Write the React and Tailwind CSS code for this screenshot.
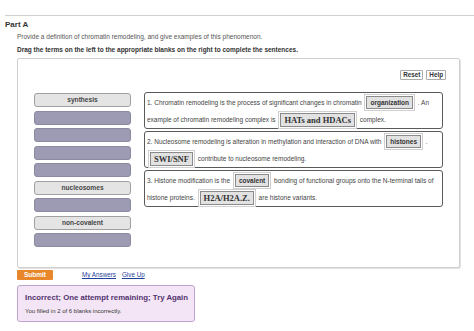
export default function App() {
  const Sans = ({ children }) => (
    <span className="inline-block align-middle mx-[3px] px-[3px] h-[13px] leading-[11px] border border-[#8a8a8a] bg-[#e2e2e2] text-[#333] font-bold text-[6.5px] outline outline-1 outline-[#d0d0d0] outline-offset-[1px]">
      {children}
    </span>
  );
  const Serif = ({ children }) => (
    <span className="inline-block align-middle mx-[3px] px-[3px] h-[14px] leading-[12px] border border-[#8a8a8a] bg-[#e2e2e2] text-[#333] font-bold text-[8.5px] font-['Liberation_Serif',serif] outline outline-1 outline-[#d0d0d0] outline-offset-[1px]">
      {children}
    </span>
  );
  const Tile = ({ label }) =>
    label ? (
      <div className="h-[14px] rounded-[3px] border border-[#a0a0a0] bg-[#e4e4e4] text-center text-[6.6px] font-bold leading-[12px] text-[#444]">
        {label}
      </div>
    ) : (
      <div className="h-[14px] rounded-[3px] border border-[#8a8aa0] bg-[#9c9bb3]" />
    );
  const Box = ({ children }) => (
    <div className="rounded-[3px] border-[1.5px] border-[#5a5a5a] bg-white px-[2px] py-[0.5px] text-[6.5px] leading-[17px] text-[#444] whitespace-nowrap">
      {children}
    </div>
  );
  return (
    <div className="w-[474px] h-[331px] bg-white pl-[5px] pt-[15px] font-['Liberation_Sans',Arial,sans-serif] overflow-hidden">
      <div className="border-t border-[#cfcfcf]" />
      <div className="mt-[4px] text-[8px] font-bold leading-[10px] text-[#333]">Part A</div>
      <div className="pl-[12px]">
        <p className="mt-[3px] text-[6.5px] leading-[8px] text-[#555]">
          Provide a definition of chromatin remodeling, and give examples of this phenomenon.
        </p>
        <p className="mt-[5px] text-[6.5px] font-bold leading-[8px] text-[#333]">
          Drag the terms on the left to the appropriate blanks on the right to complete the sentences.
        </p>
        <div className="mt-[4px] w-[443px] h-[210px] rounded-[2px] border border-[#cfcfcf] shadow-[1px_1px_1px_rgba(0,0,0,0.12)] bg-white pt-[11px] pr-[13px] pl-[16px]">
          <div className="flex justify-end gap-[3px] h-[10px]">
            <span className="px-[2px] h-[10px] leading-[8px] border border-[#aaa] rounded-[1px] bg-white text-[6.3px] font-bold text-[#333]">Reset</span>
            <span className="px-[2px] h-[10px] leading-[8px] border border-[#aaa] rounded-[1px] bg-white text-[6.3px] font-bold text-[#333]">Help</span>
          </div>
          <div className="mt-[12px] flex gap-[13px]">
            <div className="w-[97px] mt-[1px] flex flex-col gap-[3.5px]">
              <Tile label="synthesis" />
              <Tile />
              <Tile />
              <Tile />
              <Tile />
              <Tile label="nucleosomes" />
              <Tile />
              <Tile label="non-covalent" />
              <Tile />
            </div>
            <div className="w-[299px] flex flex-col gap-[2px]">
              <Box>
                1. Chromatin remodeling is the process of significant changes in chromatin <Sans>organization</Sans> . An
                <br />
                example of chromatin remodeling complex is <Serif>HATs and HDACs</Serif> complex.
              </Box>
              <Box>
                2. Nucleosome remodeling is alteration in methylation and interaction of DNA with <Sans>histones</Sans> .
                <br />
                <Serif>SWI/SNF</Serif> contribute to nucleosome remodeling.
              </Box>
              <Box>
                3. Histone modification is the <Sans>covalent</Sans> bonding of functional groups onto the N-terminal tails of
                <br />
                histone proteins. <Serif>H2A/H2A.Z.</Serif> are histone variants.
              </Box>
            </div>
          </div>
        </div>
        <div className="mt-[2px] flex items-center h-[10px]">
          <span className="w-[36px] h-[10px] rounded-[1px] bg-[#e8872a] text-white text-[6.5px] font-bold leading-[10px] text-center">Submit</span>
          <span className="ml-[29px] text-[6.3px] text-[#1f3f99] underline">My Answers</span>
          <span className="ml-[6px] text-[6.3px] text-[#1f3f99] underline">Give Up</span>
        </div>
        <div className="mt-[5px] w-[178px] h-[37px] rounded-[3px] border border-[#bfa3cf] bg-[#f3e5f5] pl-[7px] pt-[7px]">
          <div className="text-[7.8px] font-bold leading-[10px] text-[#52336f]">Incorrect; One attempt remaining; Try Again</div>
          <div className="mt-[4px] text-[6px] leading-[8px] text-[#333]">You filled in 2 of 6 blanks incorrectly.</div>
        </div>
      </div>
    </div>
  );
}
